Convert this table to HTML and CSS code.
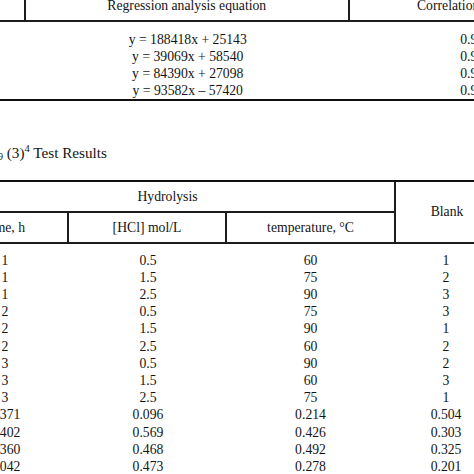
FILE: index.html
```html
<!DOCTYPE html>
<html lang="en">
<head>
<meta charset="utf-8">
<title>Regression and L9 test results</title>
<link rel="stylesheet" href="styles.css">
</head>
<body>
<div class="page">
  <table class="reg">
    <colgroup><col class="rc1"><col class="rc2"><col class="rc3"></colgroup>
    <thead>
      <tr><th class="sep"></th><th class="sep">Regression analysis equation</th><th>Correlation coefficient</th></tr>
    </thead>
    <tbody>
      <tr><td></td><td>y = 188418x + 25143</td><td>0.9993</td></tr>
      <tr><td></td><td>y = 39069x + 58540</td><td>0.9987</td></tr>
      <tr><td></td><td>y = 84390x + 27098</td><td>0.9991</td></tr>
      <tr><td></td><td>y = 93582x – 57420</td><td>0.9979</td></tr>
    </tbody>
  </table>

  <p class="caption"><span class="lead">L<sub>9</sub></span> (3)<sup>4</sup> Test Results</p>

  <table class="orth">
    <colgroup><col class="oc1"><col class="oc2"><col class="oc3"><col class="oc4"></colgroup>
    <thead>
      <tr><th class="hyd" colspan="3">Hydrolysis</th><th class="blank" rowspan="2">Blank</th></tr>
      <tr class="subh"><th class="sep">Time, h</th><th class="sep">[HCl] mol/L</th><th>temperature, °C</th></tr>
    </thead>
    <tbody>
      <tr><td>1</td><td>0.5</td><td>60</td><td>1</td></tr>
      <tr><td>1</td><td>1.5</td><td>75</td><td>2</td></tr>
      <tr><td>1</td><td>2.5</td><td>90</td><td>3</td></tr>
      <tr><td>2</td><td>0.5</td><td>75</td><td>3</td></tr>
      <tr><td>2</td><td>1.5</td><td>90</td><td>1</td></tr>
      <tr><td>2</td><td>2.5</td><td>60</td><td>2</td></tr>
      <tr><td>3</td><td>0.5</td><td>90</td><td>2</td></tr>
      <tr><td>3</td><td>1.5</td><td>60</td><td>3</td></tr>
      <tr><td>3</td><td>2.5</td><td>75</td><td>1</td></tr>
      <tr><td>0.371</td><td>0.096</td><td>0.214</td><td>0.504</td></tr>
      <tr><td>0.402</td><td>0.569</td><td>0.426</td><td>0.303</td></tr>
      <tr><td>0.360</td><td>0.468</td><td>0.492</td><td>0.325</td></tr>
      <tr><td>0.042</td><td>0.473</td><td>0.278</td><td>0.201</td></tr>
    </tbody>
  </table>
</div>
</body>
</html>
```
FILE: styles.css
```css
html, body {
  margin: 0;
  padding: 0;
  background: #ffffff;
  overflow: hidden;
}
body {
  width: 474px;
  height: 474px;
  font-family: "Liberation Serif", "Times New Roman", serif;
  color: #141414;
}
.page {
  width: 474px;
}
table {
  border-collapse: separate;
  border-spacing: 0;
  table-layout: fixed;
  font-size: 13.7px;
}
th, td {
  padding: 0;
  font-weight: normal;
  text-align: center;
  white-space: nowrap;
}

/* regression table */
.reg {
  margin: -3px 0 0 -60px;
  width: 668px;
  line-height: 17px;
  border-bottom: 2px solid #111;
}
.rc1 { width: 85.5px; }
.rc2 { width: 324.5px; }
.rc3 { width: 258px; }
.reg th {
  padding-bottom: 6px;
  border-bottom: 2px solid #1c1c1c;
}
.reg th.sep {
  border-right: 2px solid #1c1c1c;
}
.reg tbody tr:first-child td {
  padding-top: 8.5px;
}

/* caption */
.caption {
  margin: 43.7px 0 0 -40px;
  font-size: 15.2px;
  line-height: 18px;
  white-space: nowrap;
}
.lead {
  display: inline-block;
  width: 43px;
  text-align: right;
}
.caption sub {
  font-size: 10px;
  vertical-align: -2.4px;
  line-height: 0;
}
.caption sup {
  font-size: 10.5px;
  vertical-align: 5.6px;
  line-height: 0;
}

/* orthogonal test table */
.orth {
  margin: 17.5px 0 0 -59px;
  width: 557px;
  line-height: 17.2px;
  border-top: 2px solid #111;
}
.oc1 { width: 128px; }
.oc2 { width: 158px; }
.oc3 { width: 167px; }
.oc4 { width: 104px; }
.orth .hyd {
  padding: 6.15px 0;
  border-bottom: 2px solid #1c1c1c;
}
.orth .blank {
  vertical-align: middle;
  border-left: 2px solid #1c1c1c;
  border-bottom: 2px solid #1c1c1c;
}
.orth .subh th {
  padding: 5.9px 0;
  border-bottom: 2px solid #1c1c1c;
}
.orth .subh th.sep {
  border-right: 2px solid #1c1c1c;
}
.orth tbody tr:first-child td {
  padding-top: 7.4px;
}
```
